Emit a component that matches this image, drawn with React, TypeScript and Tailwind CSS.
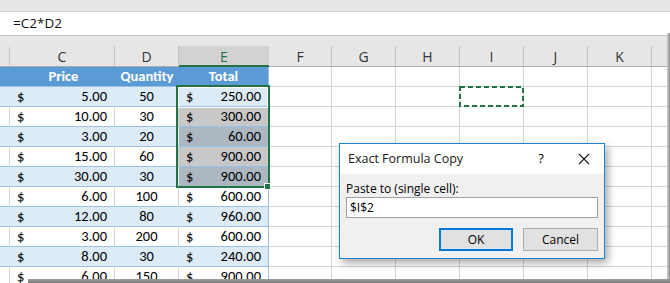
import React from "react";

const data: [string, string, string][] = [
  ["5.00", "50", "250.00"],
  ["10.00", "30", "300.00"],
  ["3.00", "20", "60.00"],
  ["15.00", "60", "900.00"],
  ["30.00", "30", "900.00"],
  ["6.00", "100", "600.00"],
  ["12.00", "80", "960.00"],
  ["3.00", "200", "600.00"],
  ["8.00", "30", "240.00"],
  ["6.00", "150", "900.00"],
];

const rest = ["w-[63px]", "w-[64px]", "w-[64px]", "w-[64px]", "w-[64px]", "w-[64px]", "w-[18px]"];

function EmptyCells() {
  return (
    <>
      {rest.map((w, i) => (
        <div key={i} className={`${w} h-full shrink-0 bg-white border-r border-b border-[#d4d4d4]`} />
      ))}
    </>
  );
}

function DataRow({ i, row }: { i: number; row: [string, string, string] }) {
  const band = i % 2 === 0;
  const sel = i >= 1 && i <= 4;
  const bg = band ? "bg-[#ddebf7]" : "bg-white";
  const vline = band ? "border-r-[#ddebf7]" : "border-r-[#d4d4d4]";
  const eBg = sel ? (band ? "bg-[#adb7c1]" : "bg-[#c8c8c8]") : bg;
  return (
    <div className="flex h-[20px] text-[14.5px] leading-[19px] text-black">
      <div className={`w-[10px] shrink-0 h-full border-r border-b border-b-[#9bc2e6] ${vline} ${bg}`} />
      <div className={`w-[105px] shrink-0 h-full flex justify-between pl-[7px] pr-[7px] border-r border-b border-b-[#9bc2e6] ${vline} ${bg}`}>
        <span>$</span>
        <span>{row[0]}</span>
      </div>
      <div className={`w-[64px] shrink-0 h-full text-center border-r border-b border-b-[#9bc2e6] ${vline} ${bg}`}>{row[1]}</div>
      <div className={`w-[90px] shrink-0 h-full flex justify-between pl-[7px] pr-[7px] border-r border-b border-b-[#9bc2e6] border-r-[#9bc2e6] ${eBg}`}>
        <span>$</span>
        <span>{row[2]}</span>
      </div>
      <EmptyCells />
    </div>
  );
}

export default function App() {
  const letters = ["F", "G", "H", "I", "J", "K"];
  return (
    <div className="relative w-[670px] h-[283px] overflow-hidden bg-white font-[family-name:Carlito,Lato,sans-serif]">
      {/* top strip */}
      <div className="h-[12px] bg-[#e6e6e6] border-b border-[#cfcfcf]" />
      {/* formula bar */}
      <div className="h-[24px] bg-white border-b border-[#c6c6c6] pl-[13px] text-[13.5px] leading-[23px] text-[#111] font-[family-name:'Open_Sans',sans-serif]">
        =C2*D2
      </div>
      <div className="h-[10px] bg-[#e6e6e6]" />
      {/* column headers */}
      <div className="flex h-[21px] bg-[#e6e6e6] border-b border-[#ababab] text-[14px] leading-[20px] text-[#333] font-[family-name:'Open_Sans',sans-serif]">
        <div className="w-[10px] shrink-0 h-full py-[1px]">
          <div className="h-full border-r border-[#c3c3c3]" />
        </div>
        <div className="w-[105px] shrink-0 h-full pt-[1px] pb-[1px] border-r border-[#c3c3c3] text-center">C</div>
        <div className="w-[64px] shrink-0 h-full pt-[1px] border-r border-[#c3c3c3] text-center">D</div>
        <div className="w-[90px] shrink-0 h-[21px] bg-[#d2d2d2] border-b-2 border-[#217346] text-center text-[#217346] pt-[1px]">E</div>
        {letters.map((l, i) => (
          <div key={l} className={`${rest[i]} shrink-0 h-full pt-[1px] border-r border-[#c3c3c3] text-center`}>{l}</div>
        ))}
        <div className="w-[18px] shrink-0 h-full" />
      </div>
      {/* table header row */}
      <div className="flex h-[20px] text-[14.5px] leading-[19px] font-bold text-white">
        <div className="w-[10px] shrink-0 h-full bg-[#5b9bd5] border-b border-[#9bc2e6]" />
        <div className="w-[105px] shrink-0 h-full bg-[#5b9bd5] border-b border-[#9bc2e6] text-center pl-[2px]">Price</div>
        <div className="w-[64px] shrink-0 h-full bg-[#5b9bd5] border-b border-[#9bc2e6] text-center">Quantity</div>
        <div className="w-[90px] shrink-0 h-full bg-[#5b9bd5] border-b border-[#9bc2e6] border-r border-r-[#9bc2e6] text-center">Total</div>
        <EmptyCells />
      </div>
      {data.map((r, i) => (
        <DataRow key={i} i={i} row={r} />
      ))}

      {/* selection */}
      <div className="absolute left-[176px] top-[85px] w-[94px] h-[103px] border-2 border-[#217346] pointer-events-none">
        <div className="absolute left-0 top-0 w-[90px] h-[21px] border border-white" />
      </div>
      <div className="absolute left-[264px] top-[183px] w-[7px] h-[7px] bg-[#217346] border border-white" />

      {/* marching ants */}
      <svg className="absolute left-[459px] top-[86px]" width="66" height="22" viewBox="0 0 66 22">
        <rect x="1" y="1" width="63" height="19" fill="none" stroke="#217346" strokeWidth="2" strokeDasharray="5 3" />
      </svg>

      {/* dialog */}
      <div className="absolute left-[339px] top-[143px] w-[266px] h-[116px] border border-[#1883d7] bg-[#f0f0f0] shadow-[3px_4px_8px_rgba(0,0,0,0.35)] flex flex-col font-[family-name:'Open_Sans',sans-serif] text-[12px] text-black">
        <div className="h-[30px] bg-white flex items-center pl-[8px] pr-[14px] text-[12.5px]">
          <span className="flex-1 text-[#1a1a1a]">Exact Formula Copy</span>
          <span className="w-[14px] text-center mr-[30px] text-[13px]">?</span>
          <svg width="12" height="12" viewBox="0 0 12 12">
            <path d="M1 1 L11 11 M11 1 L1 11" stroke="#1a1a1a" strokeWidth="1.1" />
          </svg>
        </div>
        <div className="flex flex-col px-[6px] pt-[7px] pb-[7px]">
          <div className="h-[16px] leading-[15px]">Paste to (single cell):</div>
          <div className="h-[21px] bg-white border border-[#a0a0a0] pl-[3px] leading-[19px]">$I$2</div>
          <div className="flex justify-end gap-[10px] mt-[10px]">
            <div className="w-[74px] h-[23px] bg-[#e1e1e1] border-2 border-[#0078d7] flex items-center justify-center">OK</div>
            <div className="w-[75px] h-[23px] bg-[#e1e1e1] border border-[#adadad] flex items-center justify-center">Cancel</div>
          </div>
        </div>
      </div>

      {/* screenshot shadows */}
      <div className="absolute right-0 top-[33px] w-[3px] bottom-0 bg-gradient-to-r from-[#d0d0d0] to-[#8f8f8f]" />
      <div className="absolute left-[28px] right-0 bottom-0 h-[4px] bg-gradient-to-b from-[#a0a0a0] to-[#7a7a7a]" />
    </div>
  );
}
